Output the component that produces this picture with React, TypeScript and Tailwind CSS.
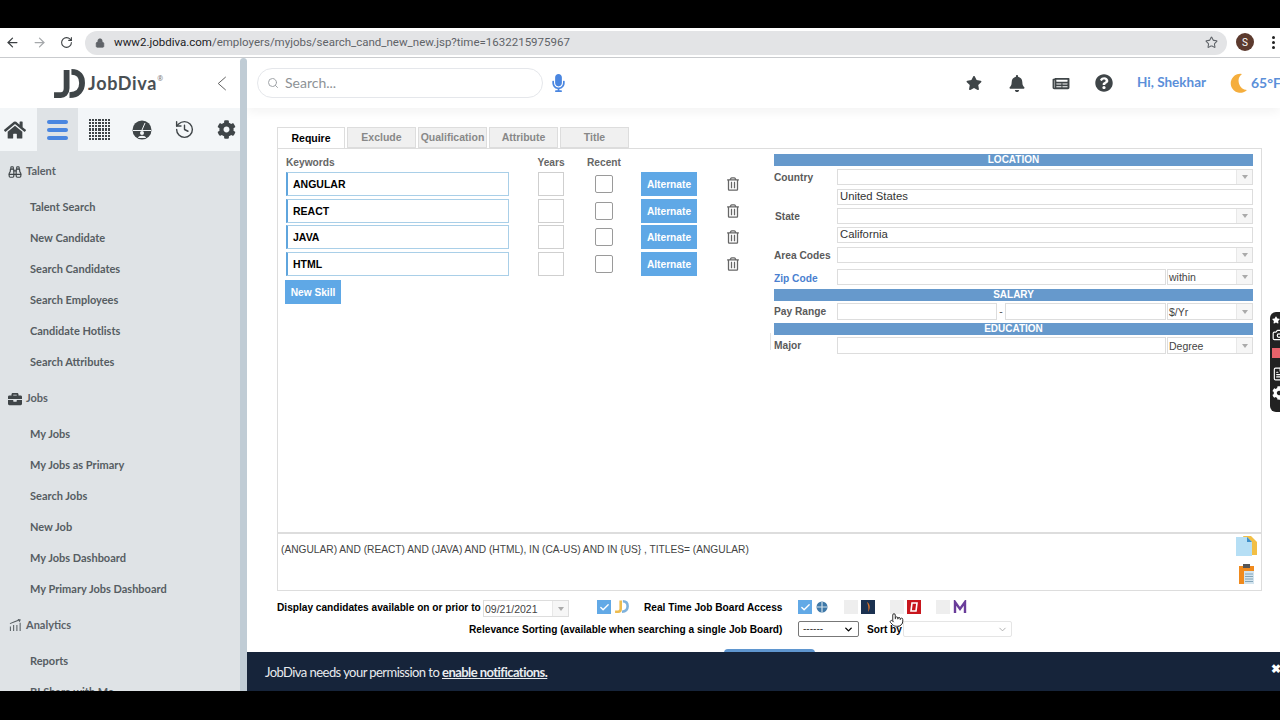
import {
  ArrowLeft, ArrowRight, RotateCw, Lock, Star, Binoculars, History, Search, Pointer, Camera, FileText, Check, ChevronDown,
} from 'lucide-react';
import {
  FaHome, FaCog, FaBriefcase, FaStar, FaBell, FaNewspaper, FaQuestionCircle, FaMicrophone, FaRegTrashAlt,
} from 'react-icons/fa';

const navGroups = [
  { title: 'Talent', icon: 'talent', items: ['Talent Search', 'New Candidate', 'Search Candidates', 'Search Employees', 'Candidate Hotlists', 'Search Attributes'] },
  { title: 'Jobs', icon: 'jobs', items: ['My Jobs', 'My Jobs as Primary', 'Search Jobs', 'New Job', 'My Jobs Dashboard', 'My Primary Jobs Dashboard'] },
  { title: 'Analytics', icon: 'analytics', items: ['Reports', 'BI Share with Me'] },
];

const skills = [
  { name: 'ANGULAR', space: '' },
  { name: 'REACT', space: 'mt-[3px]' },
  { name: 'JAVA', space: 'mt-[2px]' },
  { name: 'HTML', space: 'mt-[3px]' },
];
const tabs = ['Exclude', 'Qualification', 'Attribute', 'Title'];

function JdLogo({ className, color, color2, width = 6 }: { className: string; color: string; color2?: string; width?: number }) {
  return (
    <svg viewBox="0 0 32 30" className={className} fill="none" stroke={color} strokeWidth={width}>
      <path d="M13 1v19c0 5-3 7-6 7H0" />
      <path d="M18 3c8 0 11 5 11 11.500S25 27 16 27" stroke={color2 ?? color} />
    </svg>
  );
}

function GridIcon() {
  const cells = Array.from({ length: 49 });
  return (
    <div className="grid grid-cols-7 gap-px w-[21px] h-[21px]">
      {cells.map((_, i) => <div key={i} className="bg-[#3f4548]" />)}
    </div>
  );
}

function GaugeIcon() {
  return (
    <svg viewBox="0 0 20 20" className="w-[20px] h-[20px]">
      <circle cx="10" cy="10" r="9.500" fill="#3f4548" />
      <path d="M1 10.500h18" stroke="#f3f6f8" strokeWidth="1" />
      <path d="M10 10l3-7" stroke="#f3f6f8" strokeWidth="1" />
      <circle cx="10" cy="13" r="2" fill="#f3f6f8" />
      <path d="M6 18c0-3 8-3 8 0z" fill="#f3f6f8" />
    </svg>
  );
}

function AnalyticsIcon() {
  return (
    <svg viewBox="0 0 14 14" className="w-[13px] h-[13px]" fill="none" stroke="#555c60" strokeWidth="1.100">
      <path d="M1.500 8v5M5 6.500V13M8.500 6.500V13M12 4v9" />
      <path d="M1 5l5-2 5-2M9.500 .5L12 1l-1 2" />
    </svg>
  );
}

function MoonIcon() {
  return (
    <svg viewBox="0 0 20 20" className="w-[20px] h-[20px] shrink-0">
      <path d="M14 1a9.500 9.500 0 1 0 5 16A9 9 0 0 1 14 1z" fill="#f5ae3d" />
    </svg>
  );
}

function NavGroupIcon({ name }: { name: string }) {
  if (name === 'talent') return <Binoculars className="w-[14px] h-[14px] text-[#3f4548]" />;
  if (name === 'jobs') return <FaBriefcase className="w-[14px] h-[14px] text-[#3f4548]" />;
  return <AnalyticsIcon />;
}

function Sidebar() {
  return (
    <aside className="flex w-[247px] shrink-0 bg-white">
      <div className="w-[240px] flex flex-col overflow-hidden">
        <div className="h-[50px] shrink-0 flex items-center">
          <div className="flex items-center ml-[54px] w-[113px] shrink-0">
            <JdLogo className="w-[31px] h-[29px] shrink-0" color="#3f4548" />
            <span className="ml-[3px] text-[18px] tracking-[0.7px] text-[#4a5054] font-['Lato',sans-serif] font-bold">JobDiva</span>
            <span className="text-[7px] text-[#777] -mt-[8px]">®</span>
          </div>
          <svg viewBox="0 0 10 16" className="w-[10px] h-[15px] ml-[50px] shrink-0" fill="none" stroke="#555" strokeWidth="1">
            <path d="M9 1L1 8l8 7" />
          </svg>
        </div>
        <div className="h-[43px] shrink-0 flex bg-[#f3f6f8] items-center">
          <div className="w-[37px] pl-[4px] flex items-center shrink-0">
            <FaHome className="w-[22px] h-[20px] text-[#3f4548]" />
          </div>
          <div className="w-[41px] h-full bg-[#dfe3e6] flex flex-col items-center justify-center gap-[4px] shrink-0">
            <div className="w-[21px] h-[4px] rounded-full bg-[#4a86e0]" />
            <div className="w-[21px] h-[4px] rounded-full bg-[#4a86e0]" />
            <div className="w-[21px] h-[4px] rounded-full bg-[#4a86e0]" />
          </div>
          <div className="ml-[11px] shrink-0"><GridIcon /></div>
          <div className="ml-[22px] shrink-0"><GaugeIcon /></div>
          <History className="ml-[22px] w-[21px] h-[21px] text-[#3f4548] shrink-0" strokeWidth={1.600} />
          <FaCog className="ml-[22px] w-[19px] h-[19px] text-[#3f4548] shrink-0" />
        </div>
        <nav className="flex-1 bg-[#dfe3e6] overflow-hidden font-['Lato',sans-serif]">
          {navGroups.map((group) => (
            <div key={group.title}>
              <div className="h-[41px] flex items-center pl-[8px] gap-[4px] text-[11px] font-bold text-[#5a6166]">
                <span className="w-[14px] flex justify-center"><NavGroupIcon name={group.icon} /></span>
                {group.title}
              </div>
              {group.items.map((item) => (
                <div key={item} className="h-[31px] flex items-center pl-[30px] text-[11px] font-bold text-[#565d62] whitespace-nowrap">
                  {item}
                </div>
              ))}
            </div>
          ))}
        </nav>
      </div>
      <div className="w-[7px] bg-[#c0ccd5] rounded-t-sm" />
    </aside>
  );
}

function TopHeader() {
  return (
    <header className="h-[50px] shrink-0 flex items-center bg-white shadow-[0_4px_10px_rgba(0,0,0,0.05)] font-['Lato',sans-serif]">
      <div className="ml-[10px] w-[286px] h-[30px] shrink-0 rounded-full border border-[#e5e7eb] flex items-center pl-[9px]">
        <Search className="w-[12px] h-[12px] text-[#a0a4a8]" />
        <span className="ml-[6px] pb-[2px] text-[14px] text-[#8d9296]">Search...</span>
      </div>
      <FaMicrophone className="ml-[8px] w-[15px] h-[18px] text-[#4a86e0] shrink-0" />
      <FaStar className="ml-[400px] w-[16px] h-[16px] text-[#3f4548] shrink-0" />
      <FaBell className="ml-[27px] w-[16px] h-[17px] text-[#3f4548] shrink-0" />
      <FaNewspaper className="ml-[27px] w-[18px] h-[15px] text-[#3f4548] shrink-0" />
      <FaQuestionCircle className="ml-[25px] w-[18px] h-[18px] text-[#3f4548] shrink-0" />
      <span className="ml-[24px] pb-[1px] w-[69px] shrink-0 text-[13.500px] font-bold text-[#5b8fd9] whitespace-nowrap">Hi, Shekhar</span>
      <span className="ml-[22px] shrink-0"><MoonIcon /></span>
      <span className="ml-[3px] pb-[2px] text-[14px] font-bold text-[#5b8fd9] whitespace-nowrap">65°F</span>
    </header>
  );
}

function Combo({ value, className }: { value?: string; className: string }) {
  return (
    <div className={`flex shrink-0 border border-[#ddd] bg-white text-[10.500px] font-normal text-[#444] ${className}`}>
      <span className="flex-1 pl-[1px] leading-[14px] truncate self-center">{value}</span>
      <span className="w-[16px] bg-[#f6f6f6] border-l border-[#e8e8e8] flex items-center justify-center">
        <span className="w-0 h-0 border-l-[3px] border-r-[3px] border-t-[4px] border-l-transparent border-r-transparent border-t-[#aaa]" />
      </span>
    </div>
  );
}

function TextBox({ value, className }: { value?: string; className: string }) {
  return (
    <div className={`border border-[#ddd] bg-white pl-[2px] pb-[1px] text-[11.300px] text-[#333] flex items-center ${className}`}>
      {value}
    </div>
  );
}

function SectionBar({ title }: { title: string }) {
  return (
    <div className="h-[12px] bg-[#6699cc] flex items-center justify-center text-[10px] font-bold text-white leading-none">
      {title}
    </div>
  );
}

function FieldRow({ label, blue, className, labelClass = '', children }: { label?: string; blue?: boolean; className: string; labelClass?: string; children: React.ReactNode }) {
  return (
    <div className={`flex items-center ${className}`}>
      <span className={`w-[63px] shrink-0 text-[10.200px] font-bold ${blue ? 'text-[#4a7fd0]' : 'text-[#5a5a5a]'} ${labelClass}`}>{label}</span>
      {children}
    </div>
  );
}

function SkillsColumn() {
  return (
    <div className="ml-[8px] w-[460px]">
      <div className="flex h-[23px] pt-[5px] items-center text-[10.200px] font-bold text-[#666]">
        <span className="w-[223px]">Keywords</span>
        <span className="ml-[29px] w-[26px] flex justify-center">Years</span>
        <span className="ml-[31px] w-[18px] flex justify-center whitespace-nowrap">Recent</span>
      </div>
      <div className="flex flex-col">
        {skills.map((skill) => (
          <div key={skill.name} className={`flex items-center h-[24px] ${skill.space}`}>
            <div className="w-[223px] h-full border border-[#a9cfe8] border-l-[2px] border-l-[#5fa5dd] flex items-center pl-[5px] pt-[1px] text-[10.500px] font-bold text-black">
              {skill.name}
            </div>
            <div className="ml-[29px] w-[26px] h-full border border-[#cfcfcf]" />
            <div className="ml-[31px] w-[18px] h-[18px] border border-[#9a9a9a] rounded-[2px]" />
            <div className="ml-[28px] w-[56px] h-full bg-[#5fa8e6] flex items-center justify-center pt-[1px] text-[10.200px] font-bold text-white">
              Alternate
            </div>
            <FaRegTrashAlt className="ml-[30px] w-[12px] h-[14px] text-[#666]" />
          </div>
        ))}
      </div>
      <div className="-ml-px mt-[4px] w-[56px] h-[24px] bg-[#5fa8e6] flex items-center justify-center pt-[1px] text-[10.200px] font-bold text-white">
        New Skill
      </div>
    </div>
  );
}

function LocationColumn() {
  return (
    <div className="w-[479px] pt-[5px]">
      <SectionBar title="LOCATION" />
      <FieldRow label="Country" labelClass="pt-[2px]" className="h-[16px] mt-[3px]"><Combo className="flex-1 h-full" /></FieldRow>
      <FieldRow className="h-[16px] mt-[4px]"><TextBox value="United States" className="flex-1 h-full" /></FieldRow>
      <FieldRow label="State" labelClass="pt-[2px] pl-px" className="h-[16px] mt-[3px]"><Combo className="flex-1 h-full" /></FieldRow>
      <FieldRow className="h-[16px] mt-[3px]"><TextBox value="California" className="flex-1 h-full" /></FieldRow>
      <FieldRow label="Area Codes" labelClass="pt-px" className="h-[16px] mt-[4px]"><Combo className="flex-1 h-full" /></FieldRow>
      <FieldRow label="Zip Code" blue labelClass="pt-[3px]" className="h-[16px] mt-[6px]">
        <TextBox className="w-[329px] h-full" />
        <Combo value="within" className="ml-[1px] w-[86px] h-full" />
      </FieldRow>
      <div className="mt-[4px]"><SectionBar title="SALARY" /></div>
      <FieldRow label="Pay Range" className="h-[17px] mt-[2px]">
        <TextBox className="w-[160px] h-full" />
        <span className="w-[8px] text-center text-[10.500px] text-[#555]">-</span>
        <TextBox className="w-[161px] h-full" />
        <Combo value="$/Yr" className="ml-[1px] w-[86px] h-full" />
      </FieldRow>
      <div className="mt-[3px]"><SectionBar title="EDUCATION" /></div>
      <FieldRow label="Major" className="h-[17px] mt-[2px]">
        <TextBox className="w-[329px] h-full" />
        <Combo value="Degree" className="ml-[1px] w-[86px] h-full" />
      </FieldRow>
    </div>
  );
}

function BoardCheck() {
  return (
    <span className="w-[14px] h-[14px] shrink-0 bg-[#62a9e6] flex items-center justify-center self-start">
      <Check className="w-[11px] h-[11px] text-white" strokeWidth={3} />
    </span>
  );
}

function BoardSquare() {
  return <span className="ml-[15px] w-[14px] h-[14px] shrink-0 bg-[#eeeeee] self-start" />;
}

function SearchForm() {
  return (
    <div className="pl-[30px] font-['Liberation_Sans',sans-serif]">
      <div className="flex gap-[2px] mt-[19px]">
        <div className="w-[68px] h-[22px] -mb-px relative border border-b-0 border-[#ddd] bg-white flex items-center justify-center text-[10.500px] font-bold text-black">
          Require
        </div>
        {tabs.map((tab) => (
          <div key={tab} className="w-[69px] h-[21px] border border-[#ddd] bg-[#f0f0f0] flex items-center justify-center text-[10.500px] font-bold text-[#888]">
            {tab}
          </div>
        ))}
      </div>
      <div className="w-[985px] h-[384px] border border-b-0 border-[#ddd] flex justify-between pr-[8px] relative">
        <SkillsColumn />
        <LocationColumn />
        <span className="absolute left-[492px] top-[184px] w-px h-[17px] bg-[#e2e2e2]" />
      </div>
      <div className="w-[985px] h-[59px] border-x border-b border-t-2 border-[#ddd] flex justify-between pl-[3px] pr-[4px]">
        <span className="mt-[8px] text-[10.200px] text-[#444]">
          (ANGULAR) AND (REACT) AND (JAVA) AND (HTML), IN (CA-US) AND IN {'{US}'} , TITLES= (ANGULAR)
        </span>
        <div className="flex flex-col items-center pt-[2px] gap-[8px]">
          <svg viewBox="0 0 21 20" className="w-[21px] h-[20px]">
            <path d="M7 0h8l6 6v13h-6z" fill="#f2bf45" />
            <path d="M0 1h11l5 5v14H0z" fill="#b6dff5" />
            <path d="M11 1l5 5h-5z" fill="#3e8fc9" />
          </svg>
          <svg viewBox="0 0 15 20" className="w-[15px] h-[20px]">
            <rect y="2" width="15" height="18" fill="#f08a1d" />
            <rect x="4" width="7" height="4" fill="#555" />
            <path d="M5 7h10v13H5z" fill="#d3e4ee" />
            <path d="M6 10h8M6 12.500h8M6 15h8M6 17.500h8" stroke="#6c93ab" strokeWidth=".8" />
          </svg>
        </div>
      </div>
      <div className="flex items-center h-[17px] mt-[9px] text-[10.150px] font-bold text-black whitespace-nowrap">
        <span className="w-[206px] pb-[2px] shrink-0">Display candidates available on or prior to</span>
        <Combo value="09/21/2021" className="w-[86px] h-full" />
        <span className="ml-[28px] self-start"><BoardCheck /></span>
        <JdLogo className="ml-[4px] w-[14px] h-[13px] self-start shrink-0" color="#eebc4e" color2="#7fb2dc" />
        <span className="ml-[15px] w-[154px] pb-[2px] shrink-0">Real Time Job Board Access</span>
        <BoardCheck />
        <svg viewBox="0 0 14 14" className="ml-[3px] w-[14px] h-[14px] self-start shrink-0">
          <circle cx="7" cy="7" r="5.500" fill="#3e78a8" />
          <path d="M2 7h10M7 2v10" stroke="#cfe0ec" strokeWidth="1.200" />
        </svg>
        <BoardSquare />
        <svg viewBox="0 0 14 14" className="ml-[3px] w-[14px] h-[14px] self-start shrink-0">
          <rect width="14" height="14" fill="#1b3150" />
          <path d="M6 2c3 2 4 6 1 10 1-4 0-7-1-10z" fill="#d9722b" />
        </svg>
        <BoardSquare />
        <svg viewBox="0 0 14 14" className="ml-[3px] w-[14px] h-[14px] self-start shrink-0">
          <rect width="14" height="14" fill="#c8161d" />
          <path d="M5 3h5l-1 8H4z" fill="none" stroke="#fff" strokeWidth="1.600" />
        </svg>
        <BoardSquare />
        <svg viewBox="0 0 14 14" className="ml-[3px] w-[14px] h-[14px] self-start shrink-0" fill="none" stroke="#6a3d9a" strokeWidth="2.400">
          <path d="M2 13V2l5 7 5-7v11" />
        </svg>
      </div>
      <div className="flex items-center h-[16px] mt-[4px] ml-[192px] text-[10.150px] font-bold text-black whitespace-nowrap">
        <span className="w-[329px] pt-[1px] shrink-0">Relevance Sorting (available when searching a single Job Board)</span>
        <div className="w-[61px] h-full shrink-0 border border-[#777] rounded-[2px] flex items-center justify-between px-[4px] font-normal text-[#333]">
          ------
          <ChevronDown className="w-[11px] h-[11px] text-black" strokeWidth={3} />
        </div>
        <span className="ml-[8px] w-[36px] pt-[1px] shrink-0">Sort by</span>
        <div className="w-[109px] h-full shrink-0 border border-[#e5e5e5] rounded-[2px] flex items-center justify-end px-[3px]">
          <ChevronDown className="w-[11px] h-[11px] text-[#aaa]" />
        </div>
      </div>
      <div className="ml-[447px] mt-[12px] w-[91px] h-[20px] bg-[#5f96cf] rounded-t-sm" />
    </div>
  );
}

export default function App() {
  return (
    <div className="w-[1280px] h-[720px] bg-black flex flex-col overflow-hidden">
      <div className="h-[28px] shrink-0" />
      <div className="h-[30px] shrink-0 bg-white border-b border-[#c9cbce] pb-[1px] flex items-center font-['Roboto',sans-serif]">
        <ArrowLeft className="ml-[5px] w-[15px] h-[15px] text-[#3c4043] shrink-0" />
        <ArrowRight className="ml-[12px] w-[15px] h-[15px] text-[#a5a8ab] shrink-0" />
        <RotateCw className="ml-[13px] w-[13px] h-[13px] text-[#3c4043] shrink-0" />
        <div className="ml-[12px] mt-[1px] w-[1142px] h-[24px] shrink-0 rounded-full bg-[#e3e4e6] flex items-center">
          <Lock className="ml-[10px] w-[10px] h-[10px] text-[#5f6368] shrink-0" fill="#5f6368" />
          <span className="ml-[9px] text-[11.500px] text-[#5f6368] whitespace-nowrap">
            <span className="text-[#202124]">www2.jobdiva.com</span>/employers/myjobs/search_cand_new_new.jsp?time=1632215975967
          </span>
          <Star className="ml-auto mr-[9px] w-[13px] h-[13px] text-[#5f6368] shrink-0" />
        </div>
        <div className="ml-[9px] w-[18px] h-[18px] shrink-0 rounded-full bg-[#5c3a2e] flex items-center justify-center text-[10px] text-white">S</div>
        <div className="ml-[18px] flex flex-col gap-[2px] shrink-0">
          <span className="w-[3px] h-[3px] rounded-full bg-[#222]" />
          <span className="w-[3px] h-[3px] rounded-full bg-[#222]" />
          <span className="w-[3px] h-[3px] rounded-full bg-[#222]" />
        </div>
      </div>
      <main className="flex-1 flex min-h-0 relative">
        <Sidebar />
        <div className="flex-1 min-w-0 bg-white relative overflow-hidden">
          <TopHeader />
          <SearchForm />
          <div className="absolute left-0 right-0 bottom-0 h-[39px] bg-[#16243a] flex items-center pl-[18px] pt-[2px] font-['Lato',sans-serif] text-[13px] tracking-[-0.550px] text-[#e8ebee]">
            JobDiva needs your permission to&nbsp;
            <span className="font-bold underline">enable notifications.</span>
            <span className="absolute right-0 top-[11px] text-[12px] font-bold text-white leading-none">✖</span>
          </div>
          <Pointer className="absolute left-[642px] top-[553px] w-[15px] h-[18px] text-[#222]" fill="#fff" strokeWidth={1.500} />
          <div className="absolute left-[1023px] top-[254px] w-[10px] h-[100px] bg-[#222] rounded-l-md overflow-hidden flex flex-col items-start pt-[4px] pl-[2px] gap-[4px]">
            <FaStar className="w-[8px] h-[8px] text-white shrink-0" />
            <Camera className="w-[14px] h-[14px] text-white shrink-0" />
            <div className="w-[10px] h-[10px] bg-[#e8636b] shrink-0 mt-[2px]" />
            <FileText className="w-[14px] h-[14px] mt-[5px] text-white shrink-0" />
            <FaCog className="w-[14px] h-[14px] mt-[1px] text-white shrink-0" />
          </div>
        </div>
      </main>
      <div className="h-[29px] shrink-0" />
    </div>
  );
}
